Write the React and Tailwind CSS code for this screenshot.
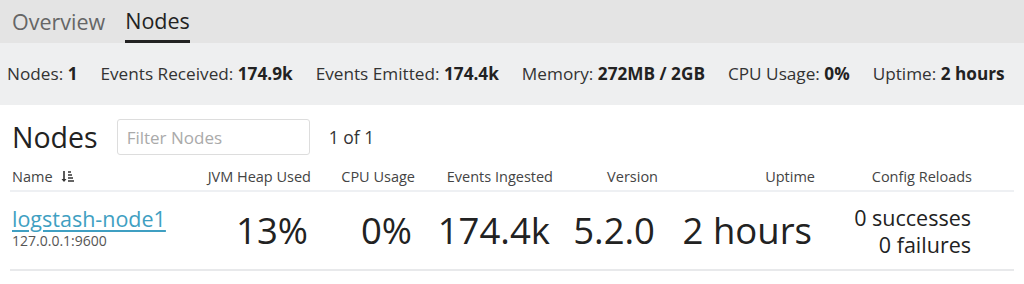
import React from 'react';

const stats = [
  { label: 'Nodes:', value: '1' },
  { label: 'Events Received:', value: '174.9k' },
  { label: 'Events Emitted:', value: '174.4k' },
  { label: 'Memory:', value: '272MB / 2GB' },
  { label: 'CPU Usage:', value: '0%' },
  { label: 'Uptime:', value: '2 hours' },
];

const cols = 'grid grid-cols-[190px_114px_104px_138px_105px_157px_157px_1fr]';

const SortIcon = () => (
  <svg width="14" height="14" viewBox="0 0 14 14" className="ml-2 text-[#333]">
    <path d="M3 1v10" stroke="currentColor" strokeWidth="1.6" />
    <path d="M0.5 9l2.5 3 2.5-3z" fill="currentColor" />
    <path d="M7 2h3M7 5h4M7 8h5M7 11h6" stroke="currentColor" strokeWidth="1.3" />
  </svg>
);

export default function App() {
  return (
    <div className="w-[1024px] h-[284px] bg-white overflow-hidden text-[#333]" style={{ fontFamily: '"Open Sans", "Liberation Sans", sans-serif' }}>
      {/* tabs */}
      <div className="h-[43px] bg-[#e4e4e4] flex items-end px-[12px] gap-[20px]">
        <div className="text-[21.5px] text-[#666] pb-[11px] leading-none">Overview</div>
        <div className="text-[21.5px] text-[#222] leading-none pb-[9px] border-b-[3px] border-[#222]">Nodes</div>
      </div>

      {/* stats bar */}
      <div className="h-[62px] bg-[#eeeff0] flex items-center pl-[7px] gap-[23px] text-[17.2px] text-[#333]">
        {stats.map((s) => (
          <div key={s.label} className="whitespace-nowrap">
            {s.label} <span className="font-bold text-[#222]">{s.value}</span>
          </div>
        ))}
      </div>

      {/* nodes section */}
      <div className="px-[10px]">
        <div className="flex items-center h-[62px] pt-[2px]">
          <h1 className="text-[28.5px] text-[#222] pl-[2px] leading-none">Nodes</h1>
          <input
            placeholder="Filter Nodes"
            className="ml-[19px] w-[193px] h-[36px] border border-[#ddd] rounded-[3px] px-[9px] text-[17px] placeholder-[#aaa] outline-none"
          />
          <span className="ml-[19px] text-[17.5px] text-[#333]">1 of 1</span>
        </div>

        <div className={`${cols} h-[25px] items-start text-[14.5px] leading-[20px] text-[#444] border-b-2 border-[#eef0f3]`}>
          <div className="pl-[2px] flex items-center">Name <SortIcon /></div>
          <div className="text-right pr-[3px]">JVM Heap Used</div>
          <div className="text-right pr-[3px]">CPU Usage</div>
          <div className="text-right pr-[3px]">Events Ingested</div>
          <div className="text-right pr-[3px]">Version</div>
          <div className="text-right pr-[3px]">Uptime</div>
          <div className="text-right pr-[3px]">Config Reloads</div>
          <div />
        </div>

        <div className={`${cols} h-[79px] items-center border-b-2 border-[#e8e9eb]`}>
          <div className="pl-[2px] pb-[6px]">
            <a href="#" className="block text-[21.5px] leading-[26px] text-[#3f9fc2] underline underline-offset-[3px]">logstash-node1</a>
            <div className="text-[14px] leading-[17px] text-[#555]">127.0.0.1:9600</div>
          </div>
          <div className="text-right pr-[6px] text-[36.5px] text-[#222]">13%</div>
          <div className="text-right pr-[6px] text-[36.5px] text-[#222]">0%</div>
          <div className="text-right pr-[6px] text-[36.5px] text-[#222]">174.4k</div>
          <div className="text-right pr-[6px] text-[36.5px] text-[#222]">5.2.0</div>
          <div className="text-right pr-[6px] text-[36.5px] text-[#222]">2 hours</div>
          <div className="text-right pr-[4px] text-[21.5px] leading-[27px] text-[#222]">
            <div>0 successes</div>
            <div>0 failures</div>
          </div>
          <div />
        </div>
      </div>
    </div>
  );
}
